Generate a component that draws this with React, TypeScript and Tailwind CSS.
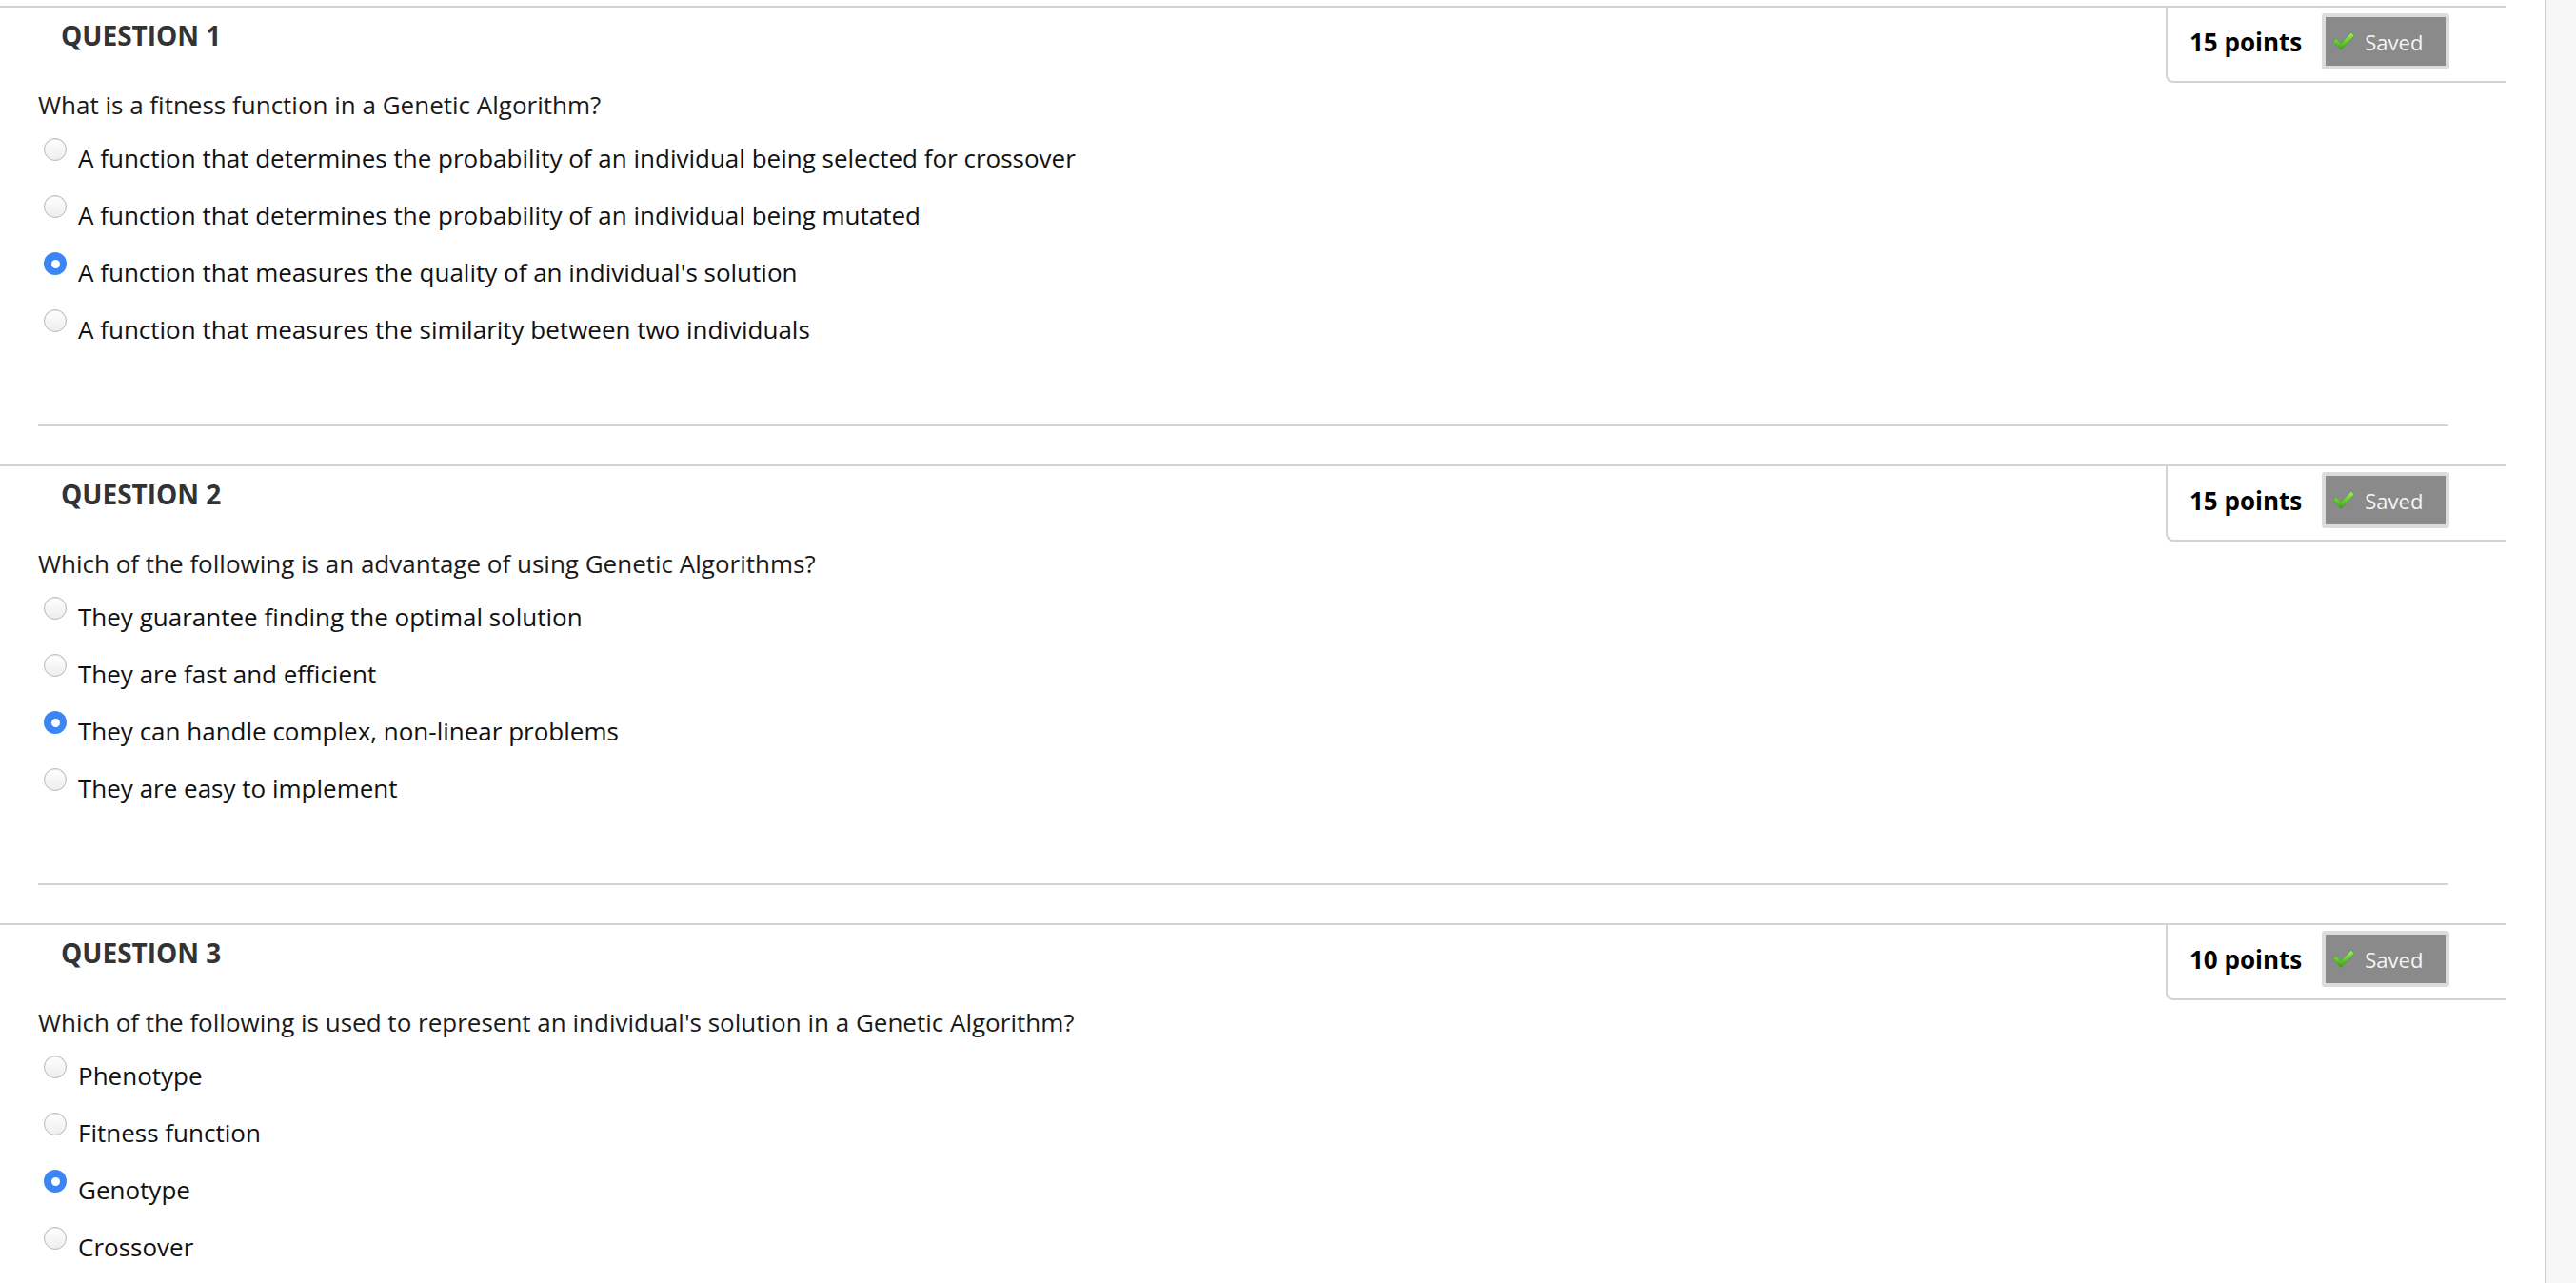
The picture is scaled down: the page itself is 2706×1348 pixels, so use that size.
import React from "react";

type Question = {
  id: number;
  points: number;
  text: string;
  options: string[];
  selected: number;
};

const questions: Question[] = [
  {
    id: 1,
    points: 15,
    text: "What is a fitness function in a Genetic Algorithm?",
    options: [
      "A function that determines the probability of an individual being selected for crossover",
      "A function that determines the probability of an individual being mutated",
      "A function that measures the quality of an individual's solution",
      "A function that measures the similarity between two individuals",
    ],
    selected: 2,
  },
  {
    id: 2,
    points: 15,
    text: "Which of the following is an advantage of using Genetic Algorithms?",
    options: [
      "They guarantee finding the optimal solution",
      "They are fast and efficient",
      "They can handle complex, non-linear problems",
      "They are easy to implement",
    ],
    selected: 2,
  },
  {
    id: 3,
    points: 10,
    text: "Which of the following is used to represent an individual's solution in a Genetic Algorithm?",
    options: ["Phenotype", "Fitness function", "Genotype", "Crossover"],
    selected: 2,
  },
];

function CheckIcon() {
  return (
    <svg width="24" height="21" viewBox="0 0 24 21">
      <defs>
        <linearGradient id="chk" x1="0" y1="0" x2="0" y2="1">
          <stop offset="0" stopColor="#a6ee72" />
          <stop offset="0.55" stopColor="#62c934" />
          <stop offset="1" stopColor="#3c9a1c" />
        </linearGradient>
      </defs>
      <path
        d="M0.8 10.5 L4 7.3 L9 12.2 L19.8 1.2 L23.2 4.5 L9 19.6 Z"
        fill="url(#chk)"
        stroke="#4c9c2a"
        strokeWidth="0.7"
        strokeLinejoin="round"
      />
    </svg>
  );
}

function Radio({ checked }: { checked: boolean }) {
  if (checked) {
    return (
      <span className="-mt-[3px] ml-[46px] flex h-[24px] w-[24px] shrink-0 items-center justify-center rounded-full bg-[#3b86f4]">
        <span className="h-[9px] w-[9px] rounded-full bg-white" />
      </span>
    );
  }
  return (
    <span className="-mt-[3px] ml-[46px] h-[24px] w-[24px] shrink-0 rounded-full border border-[#b9b9b9] bg-gradient-to-b from-white to-[#eeeeee] shadow-[inset_0_1px_1px_rgba(0,0,0,0.08)]" />
  );
}

function QuestionBlock({ q }: { q: Question }) {
  return (
    <section className="border-t-2 border-[#d3d3d3]">
      <div className="flex items-start justify-between">
        <h2 className="pl-[64px] pt-[9px] text-[28px] leading-[40px] font-bold text-[#333]">
          QUESTION {q.id}
        </h2>
        <div className="h-[79px] w-[357px] rounded-bl-[8px] border-b-2 border-l-2 border-[#d3d3d3] pt-[6px]">
          <div className="flex h-[59px] items-center pl-[23px]">
            <span className="text-[26px] leading-[36px] font-bold text-black">
              {q.points} points
            </span>
            <span className="ml-[21px] flex h-[59px] w-[134px] items-center rounded-[3px] border-4 border-[#dcdcdc] bg-[#8a8a8a] pl-[7px]">
              <CheckIcon />
              <span className="ml-[10px] text-[22px] leading-[30px] text-[#f4f4f4]">
                Saved
              </span>
            </span>
          </div>
        </div>
      </div>

      <p className="mt-[5px] pl-[40px] text-[26px] leading-[36px] text-[#1a1a1a]">
        {q.text}
      </p>

      <div className="mt-[20px] flex flex-col gap-[24px]">
        {q.options.map((opt, i) => (
          <label key={opt} className="flex items-start">
            <Radio checked={i === q.selected} />
            <span className="ml-[12px] text-[26px] leading-[36px] text-[#111]">
              {opt}
            </span>
          </label>
        ))}
      </div>

      <div className="mt-[82px] mb-[40px] ml-[40px] h-[2px] w-[2532px] bg-[#d3d3d3]" />
    </section>
  );
}

export default function App() {
  return (
    <div
      className="flex h-[1348px] w-[2706px] overflow-hidden bg-white"
      style={{ fontFamily: '"Open Sans", "Noto Sans", sans-serif' }}
    >
      <main className="w-[2632px] shrink-0 pt-[6px]">
        {questions.map((q) => (
          <QuestionBlock key={q.id} q={q} />
        ))}
      </main>
      <div className="w-[41px] shrink-0" />
      <div className="flex-1 border-l-2 border-[#cfcfcf] bg-[#f7f7f7]" />
    </div>
  );
}
